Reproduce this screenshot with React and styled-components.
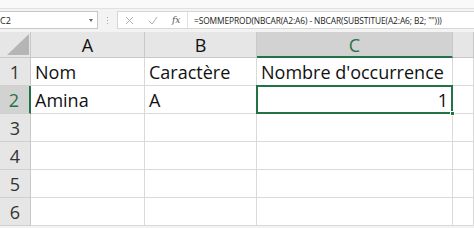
import React from 'react';
import styled, { createGlobalStyle } from 'styled-components';

const GlobalStyle = createGlobalStyle`
  html, body {
    margin: 0;
    padding: 0;
    background: #ffffff;
    overflow: hidden;
  }
  body {
    font-family: "Open Sans", "Liberation Sans", sans-serif;
  }
`;

const GREEN = '#217346';
const GRID = '#d9d9d9';

const Page = styled.div`
  width: 474px;
  height: 228px;
  overflow: hidden;
  background: #f3f3f3;
  display: flex;
  flex-direction: column;
`;

const TopStrip = styled.div`
  height: 9px;
  background: #f9f9f9;
  border-bottom: 1px solid #e1e1e1;
  box-sizing: border-box;
`;

const FormulaRow = styled.div`
  height: 23px;
  display: flex;
  align-items: flex-start;
  padding-top: 2px;
  box-sizing: border-box;
`;

const NameBox = styled.div`
  width: 98px;
  height: 18px;
  background: #fff;
  border: 1px solid #c6c6c6;
  border-left: none;
  box-sizing: border-box;
  display: flex;
  align-items: center;
  justify-content: space-between;
  padding: 0 4px 0 0;
  font-size: 9px;
  color: #222;
`;

const Caret = styled.span`
  width: 0;
  height: 0;
  border-left: 2.5px solid transparent;
  border-right: 2.5px solid transparent;
  border-top: 3px solid #666;
`;

const Dots = styled.div`
  width: 19px;
  height: 18px;
  display: flex;
  flex-direction: column;
  align-items: center;
  justify-content: center;
  gap: 2px;
  & > span {
    width: 1px;
    height: 1px;
    background: #a8a8a8;
  }
`;

const FormulaBox = styled.div`
  flex: 1;
  height: 18px;
  background: #fff;
  border: 1px solid #d6d6d6;
  border-right: none;
  box-sizing: border-box;
  display: flex;
  align-items: center;
`;

const Buttons = styled.div`
  width: 70px;
  height: 100%;
  display: flex;
  align-items: center;
  border-right: 1px solid #e0e0e0;
  padding-left: 7px;
  gap: 14px;
  box-sizing: border-box;
`;

const Fx = styled.span`
  font-family: "DejaVu Serif", serif;
  font-style: italic;
  font-size: 9px;
  color: #555;
`;

const FormulaText = styled.div`
  padding-left: 6px;
  font-size: 8.4px;
  letter-spacing: -0.1px;
  color: #222;
  white-space: nowrap;
`;

const Sheet = styled.div`
  display: grid;
  grid-template-columns: 31px 114px 112px 196px 1fr;
  grid-template-rows: 26px repeat(6, 28px);
  background: #fff;
  font-size: 18px;
`;

const Corner = styled.div`
  background: #e6e6e6;
  border-right: 1px solid #c8c8c8;
  border-bottom: 1px solid #c8c8c8;
  display: flex;
  align-items: flex-end;
  justify-content: flex-end;
  padding: 0 1px 2px 0;
`;

const ColHead = styled.div`
  background: ${(p) => (p.$active ? '#d2d2d2' : '#e6e6e6')};
  color: ${(p) => (p.$active ? GREEN : '#111')};
  border-right: 1px solid #c8c8c8;
  border-bottom: ${(p) => (p.$active ? `2px solid ${GREEN}` : '1px solid #c8c8c8')};
  display: flex;
  align-items: center;
  justify-content: center;
  padding-top: 1px;
  box-sizing: border-box;
`;

const RowHead = styled.div`
  background: ${(p) => (p.$active ? '#d2d2d2' : '#e6e6e6')};
  color: ${(p) => (p.$active ? GREEN : '#333')};
  border-right: ${(p) => (p.$active ? `2px solid ${GREEN}` : '1px solid #c8c8c8')};
  border-bottom: 1px solid #cfcfcf;
  display: flex;
  align-items: center;
  justify-content: center;
  padding-right: ${(p) => (p.$active ? '1px' : '0')};
  box-sizing: border-box;
`;

const Cell = styled.div`
  position: relative;
  border-right: 1px solid ${GRID};
  border-bottom: 1px solid ${GRID};
  display: flex;
  align-items: center;
  justify-content: ${(p) => (p.$num ? 'flex-end' : 'flex-start')};
  padding: 0 4px;
  color: #111;
  white-space: nowrap;
  box-sizing: border-box;
  ${(p) =>
    p.$selected &&
    `
    &::after {
      content: '';
      position: absolute;
      left: -1px;
      top: -1px;
      right: -1px;
      bottom: -1px;
      border: 2px solid ${GREEN};
      pointer-events: none;
    }
    &::before {
      content: '';
      position: absolute;
      right: -3px;
      bottom: -3px;
      width: 5px;
      height: 5px;
      background: ${GREEN};
      border: 1px solid #fff;
      box-sizing: border-box;
      z-index: 2;
    }
  `}
`;

const columns = ['A', 'B', 'C', ''];
const data = [
  ['Nom', 'Caractère', "Nombre d'occurrence", ''],
  ['Amina', 'A', 1, ''],
  ['', '', '', ''],
  ['', '', '', ''],
  ['', '', '', ''],
  ['', '', '', ''],
];

const App = () => {
  return (
    <Page>
      <GlobalStyle />
      <TopStrip />
      <FormulaRow>
        <NameBox>
          <span>C2</span>
          <Caret />
        </NameBox>
        <Dots>
          <span />
          <span />
          <span />
        </Dots>
        <FormulaBox>
          <Buttons>
            <svg width="9" height="9" viewBox="0 0 9 9">
              <path d="M1 1 L8 8 M8 1 L1 8" stroke="#b0b0b0" strokeWidth="1" />
            </svg>
            <svg width="10" height="9" viewBox="0 0 10 9">
              <path d="M1 5 L4 8 L9 1" stroke="#b0b0b0" strokeWidth="1" fill="none" />
            </svg>
            <Fx>fx</Fx>
          </Buttons>
          <FormulaText>=SOMMEPROD(NBCAR(A2:A6) - NBCAR(SUBSTITUE(A2:A6; B2; "")))</FormulaText>
        </FormulaBox>
      </FormulaRow>
      <Sheet>
        <Corner>
          <svg width="22" height="21" viewBox="0 0 22 21">
            <polygon points="22,0 22,21 0,21" fill="#b5b5b5" />
          </svg>
        </Corner>
        {columns.map((c, i) => (
          <ColHead key={i} $active={c === 'C'}>
            {c}
          </ColHead>
        ))}
        {data.map((row, r) => (
          <React.Fragment key={r}>
            <RowHead $active={r === 1}>{r + 1}</RowHead>
            {row.map((v, c) => (
              <Cell key={c} $num={typeof v === 'number'} $selected={r === 1 && c === 2}>
                {v}
              </Cell>
            ))}
          </React.Fragment>
        ))}
      </Sheet>
    </Page>
  );
};

export default App;
